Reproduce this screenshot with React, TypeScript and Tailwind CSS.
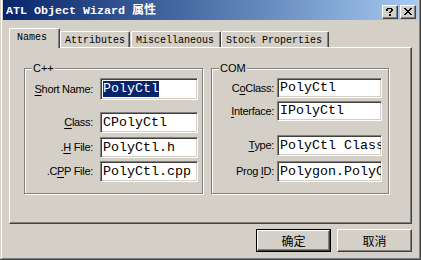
import React from "react";

const mono = "font-['Liberation_Mono','Courier_New',monospace]";
const sans = "font-['Liberation_Sans',Arial,sans-serif]";
const cjk = "font-['Noto_Sans_CJK_SC','Noto_Sans',sans-serif]";

function CaptionButton({ children }: { children: React.ReactNode }) {
  return (
    <div className="w-[16px] h-[14px] bg-[#D4D0C8] border border-t-white border-l-white border-r-[#404040] border-b-[#404040] shadow-[inset_-1px_-1px_0_#808080] flex items-center justify-center">
      {children}
    </div>
  );
}

function Field({
  text,
  selected,
  w,
  h,
}: {
  text: string;
  selected?: boolean;
  w: string;
  h: string;
}) {
  return (
    <div
      className={`${w} ${h} bg-white border border-t-[#808080] border-l-[#808080] border-r-white border-b-white shadow-[inset_1px_1px_0_#404040,inset_-1px_-1px_0_#D4D0C8] overflow-hidden whitespace-nowrap flex items-center pl-[2px] ${mono} text-[13.33px] leading-[16px] text-black`}
    >
      {selected ? (
        <span className="bg-[#0A246A] text-white">{text}</span>
      ) : (
        <span>{text}</span>
      )}
    </div>
  );
}

function Label({ pre, ul, post, w }: { pre: string; ul: string; post: string; w: string }) {
  return (
    <div className={`${w} text-right ${sans} text-[11px] tracking-[-0.3px] text-black pr-[0px]`}>
      {pre}
      <span className="underline underline-offset-[2px]">{ul}</span>
      {post}
    </div>
  );
}

function GroupBox({
  title,
  w,
  children,
}: {
  title: string;
  w: string;
  children: React.ReactNode;
}) {
  return (
    <div
      className={`relative ${w} h-[126px] border border-[#808080] shadow-[inset_1px_1px_0_white,1px_1px_0_white]`}
    >
      <div
        className={`absolute left-[7px] top-[-7px] px-[1px] bg-[#D4D0C8] ${sans} text-[11px] leading-[13px] text-black`}
      >
        {title}
      </div>
      {children}
    </div>
  );
}

function Tab({ label, w, active }: { label: string; w: string; active?: boolean }) {
  if (active) {
    return (
      <div
        className={`relative z-10 ${w} h-[20px] -mb-[1px] bg-[#D4D0C8] border-t border-l border-r border-t-white border-l-white border-r-[#404040] rounded-tl-[2px] rounded-tr-[2px] shadow-[inset_-1px_0_0_#808080] pl-[7px] pt-[3px] ${mono} text-[10px] leading-[12px] text-black`}
      >
        {label}
      </div>
    );
  }
  return (
    <div
      className={`${w} h-[16px] bg-[#D4D0C8] border-t border-l border-r border-t-white border-l-white border-r-[#404040] rounded-tl-[2px] rounded-tr-[2px] shadow-[inset_-1px_0_0_#808080] pl-[4px] pt-[3px] ${mono} text-[10px] leading-[12px] text-black`}
    >
      {label}
    </div>
  );
}

export default function App() {
  return (
    <div className="w-[421px] h-[260px] bg-[#D4D0C8] pl-[1px] border-r border-b border-r-[#404040] border-b-[#404040]">
      <div className="h-full flex flex-col border-l border-r border-b border-l-white border-r-[#808080] border-b-[#808080]">
        {/* Title bar */}
        <div className="mx-[1px] h-[20px] bg-gradient-to-r from-[#0A246A] to-[#A6CAF0] flex items-center pl-[3px] pr-[2px]">
          <span className={`text-white font-bold ${mono} text-[11.67px] leading-[14px] whitespace-nowrap`}>
            ATL Object Wizard{" "}
            <span className={`${cjk} text-[12px] font-bold`}>属性</span>
          </span>
          <div className="ml-auto flex gap-[2px] mt-[3px]">
            <CaptionButton>
              <svg width="8" height="8" viewBox="0 0 8 8" shapeRendering="crispEdges">
                <rect x="1" y="0" width="5" height="1" fill="#000" />
                <rect x="0" y="1" width="2" height="2" fill="#000" />
                <rect x="5" y="1" width="2" height="2" fill="#000" />
                <rect x="4" y="3" width="2" height="1" fill="#000" />
                <rect x="3" y="4" width="2" height="1" fill="#000" />
                <rect x="3" y="6" width="2" height="2" fill="#000" />
              </svg>
            </CaptionButton>
            <CaptionButton>
              <svg width="8" height="7" viewBox="0 0 8 7" shapeRendering="crispEdges">
                <path d="M0 0h2v1h-2zM6 0h2v1h-2zM1 1h2v1h-2zM5 1h2v1h-2zM2 2h4v1h-4zM3 3h2v1h-2zM2 4h4v1h-4zM1 5h2v1h-2zM5 5h2v1h-2zM0 6h2v1h-2zM6 6h2v1h-2z" fill="#000" />
              </svg>
            </CaptionButton>
          </div>
        </div>

        {/* Tabs */}
        <div className="ml-[7px] mt-[8px] h-[19px] flex items-end">
          <Tab label="Names" w="w-[51px]" active />
          <Tab label="Attributes" w="w-[70px]" />
          <div className="w-[1px]" />
          <Tab label="Miscellaneous" w="w-[90px]" />
          <Tab label="Stock Properties" w="w-[108px]" />
        </div>

        {/* Panel */}
        <div className="ml-[7px] w-[403px] h-[177px] border border-t-white border-l-white border-r-[#404040] border-b-[#404040] shadow-[inset_-1px_-1px_0_#808080] pl-[14px] pt-[20px] flex gap-[8px]">
          <GroupBox title="C++" w="w-[179px]">
            <div className="flex flex-col pt-[9px]">
              <div className="flex items-center h-[22px]">
                <Label pre="" ul="S" post="hort Name:" w="w-[68px]" />
                <div className="ml-[7px]">
                  <Field text="PolyCtl" selected w="w-[98px]" h="h-[22px]" />
                </div>
              </div>
              <div className="flex items-center h-[21px] mt-[12px]">
                <Label pre="" ul="C" post="lass:" w="w-[68px]" />
                <div className="ml-[7px]">
                  <Field text="CPolyCtl" w="w-[98px]" h="h-[21px]" />
                </div>
              </div>
              <div className="flex items-center h-[21px] mt-[4px]">
                <Label pre="." ul="H" post=" File:" w="w-[68px]" />
                <div className="ml-[7px]">
                  <Field text="PolyCtl.h" w="w-[98px]" h="h-[21px]" />
                </div>
              </div>
              <div className="flex items-center h-[21px] mt-[3px]">
                <Label pre=".C" ul="P" post="P File:" w="w-[68px]" />
                <div className="ml-[7px]">
                  <Field text="PolyCtl.cpp" w="w-[98px]" h="h-[21px]" />
                </div>
              </div>
            </div>
          </GroupBox>
          <GroupBox title="COM" w="w-[178px]">
            <div className="flex flex-col pt-[9px]">
              <div className="flex items-center h-[20px]">
                <Label pre="C" ul="o" post="Class:" w="w-[62px]" />
                <div className="ml-[3px]">
                  <Field text="PolyCtl" w="w-[105px]" h="h-[20px]" />
                </div>
              </div>
              <div className="flex items-center h-[20px] mt-[3px]">
                <Label pre="" ul="I" post="nterface:" w="w-[62px]" />
                <div className="ml-[3px]">
                  <Field text="IPolyCtl" w="w-[105px]" h="h-[20px]" />
                </div>
              </div>
              <div className="flex items-center h-[21px] mt-[14px]">
                <Label pre="" ul="T" post="ype:" w="w-[62px]" />
                <div className="ml-[3px]">
                  <Field text="PolyCtl Class" w="w-[105px]" h="h-[21px]" />
                </div>
              </div>
              <div className="flex items-center h-[21px] mt-[5px]">
                <Label pre="Prog " ul="I" post="D:" w="w-[62px]" />
                <div className="ml-[3px]">
                  <Field text="Polygon.PolyCtl.1" w="w-[105px]" h="h-[21px]" />
                </div>
              </div>
            </div>
          </GroupBox>
        </div>

        {/* Buttons */}
        <div className="mt-[5px] flex justify-end gap-[6px] pr-[7px]">
          <div className="w-[75px] h-[23px] border border-black">
            <div className={`w-full h-full border border-t-white border-l-white border-r-[#404040] border-b-[#404040] shadow-[inset_-1px_-1px_0_#808080] flex items-center justify-center ${cjk} text-[12px] leading-[14px] text-black`}>
              确定
            </div>
          </div>
          <div className={`w-[75px] h-[23px] border border-t-white border-l-white border-r-[#404040] border-b-[#404040] shadow-[inset_-1px_-1px_0_#808080] flex items-center justify-center ${cjk} text-[12px] leading-[14px] text-black`}>
            取消
          </div>
        </div>
      </div>
    </div>
  );
}
